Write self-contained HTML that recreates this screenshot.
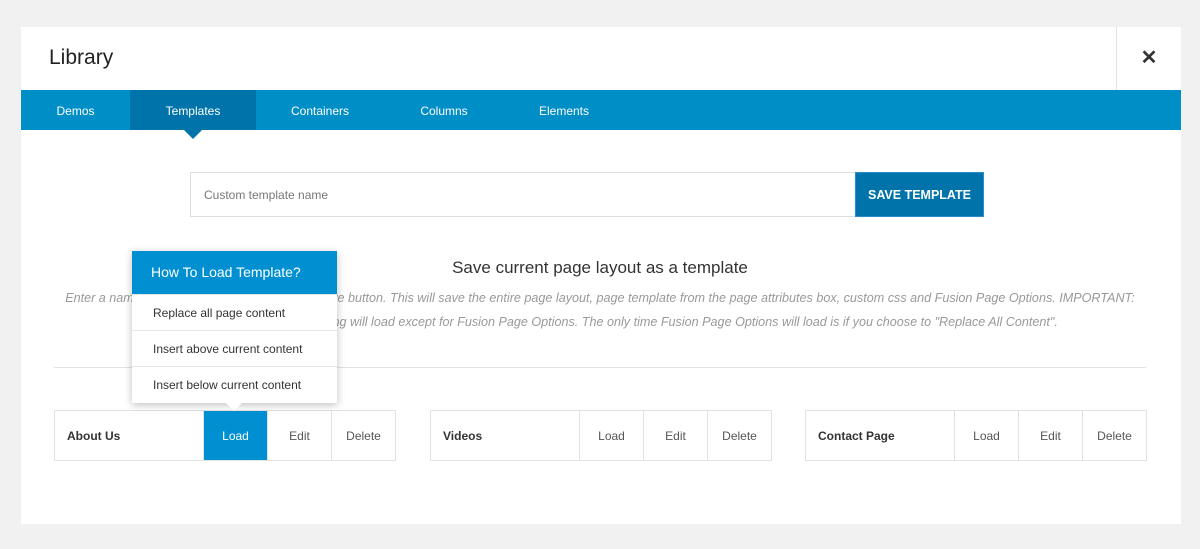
<!DOCTYPE html>
<html><head><meta charset="utf-8"><style>
*{box-sizing:border-box;margin:0;padding:0}
body{width:1200px;height:549px;background:#f1f1f1;font-family:"Liberation Sans",sans-serif;position:relative;overflow:hidden}
.panel{position:absolute;left:21px;top:27px;width:1160px;height:497px;background:#fff}
.a{position:absolute}
.title{left:49px;top:46px;font-size:21px;color:#222}
.close{left:1116px;top:27px;width:65px;height:63px;border-left:1px solid #e2e2e2;font-size:20px;color:#333;text-align:center;line-height:63px;font-weight:bold}
.nav{left:21px;top:90px;width:1160px;height:40px;background:#008ec7}
.tab{position:absolute;top:0;height:40px;line-height:42px;color:#fff;font-size:12px;text-align:center}
.input{left:190px;top:172px;width:666px;height:45px;border:1px solid #ddd;font-size:12px;color:#777;padding-left:13px;line-height:44px}
.btn{left:855px;top:172px;width:129px;height:45px;background:#0073aa;border:1px solid #2a8ccc;color:#fff;font-weight:bold;font-size:12.5px;text-align:center;line-height:44px}
.h{left:0;width:1200px;top:258px;text-align:center;font-size:17px;color:#333}
.desc{left:0;width:1200px;top:286px;text-align:center;font-size:12.6px;font-style:italic;color:#999;line-height:24px;white-space:nowrap}
.hr{left:54px;top:367px;width:1092px;height:1px;background:#e2e2e2}
.card{position:absolute;top:410px;height:51px;border:1px solid #e2e2e2;display:flex;font-size:12px;color:#555}
.card div{border-left:1px solid #e2e2e2;width:64px;text-align:center;line-height:51px}
.card div.n{border-left:none;width:148px;text-align:left;padding-left:12px;font-weight:bold;color:#333}
.card div.on{background:#0090d2;color:#fff}
.pop{left:132px;top:251px;width:205px;height:152px;background:#fff;box-shadow:0 2px 8px rgba(0,0,0,.25)}
.pop .hd{height:43px;background:#0090d2;color:#fff;font-size:14px;line-height:43px;padding-left:19px}
.pop .it{height:36px;line-height:36px;font-size:12px;color:#333;padding-left:21px;border-top:1px solid #e6e6e6}
.pop .it:first-of-type{border-top:none}
</style></head><body>
<div class="panel"></div>
<div class="a title">Library</div>
<div class="a close">✕</div>
<div class="a nav">
<div class="tab" style="left:0;width:109px">Demos</div>
<div class="tab" style="left:109px;width:126px;background:#0073aa">Templates</div>
<div class="tab" style="left:235px;width:128px">Containers</div>
<div class="tab" style="left:363px;width:120px">Columns</div>
<div class="tab" style="left:483px;width:120px">Elements</div>
</div>
<div class="a" style="left:184px;top:130px;width:0;height:0;border-left:9px solid transparent;border-right:9px solid transparent;border-top:9px solid #0073aa"></div>
<div class="a input">Custom template name</div>
<div class="a btn">SAVE TEMPLATE</div>
<div class="a h">Save current page layout as a template</div>
<div class="a desc">Enter a name for your template and click the Save button. This will save the entire page layout, page template from the page attributes box, custom css and Fusion Page Options. IMPORTANT:<br>When loading a template, everything will load except for Fusion Page Options. The only time Fusion Page Options will load is if you choose to "Replace All Content".</div>
<div class="a hr"></div>
<div class="card" style="left:54px;width:342px"><div class="n">About Us</div><div class="on">Load</div><div>Edit</div><div>Delete</div></div>
<div class="card" style="left:430px;width:342px"><div class="n">Videos</div><div>Load</div><div>Edit</div><div>Delete</div></div>
<div class="card" style="left:805px;width:342px"><div class="n">Contact Page</div><div>Load</div><div>Edit</div><div>Delete</div></div>
<div class="a pop"><div class="hd">How To Load Template?</div><div class="it">Replace all page content</div><div class="it">Insert above current content</div><div class="it">Insert below current content</div></div>
<div class="a" style="left:226px;top:403px;width:0;height:0;border-left:8px solid transparent;border-right:8px solid transparent;border-top:8px solid #fff"></div>
</body></html>
